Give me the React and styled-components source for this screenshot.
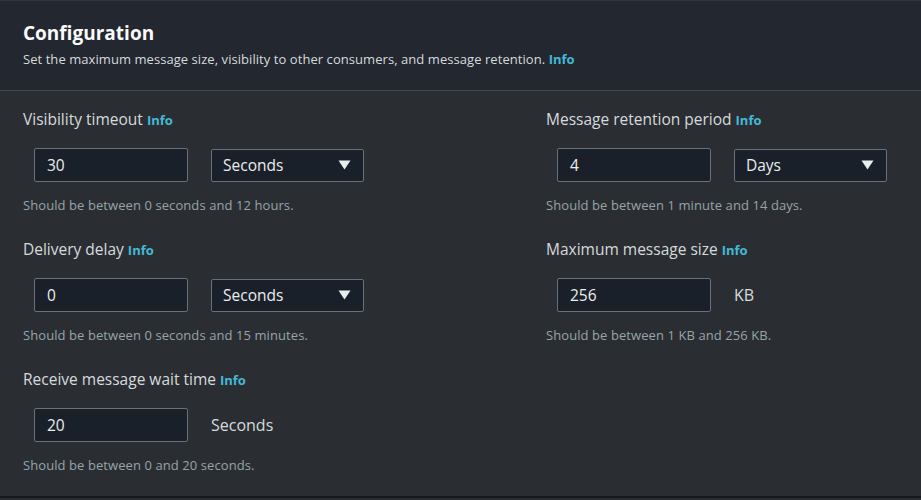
import React from 'react';
import styled, { createGlobalStyle } from 'styled-components';

const GlobalStyle = createGlobalStyle`
  html, body {
    margin: 0;
    padding: 0;
    background: #2a2e33;
  }
  body {
    font-family: 'Open Sans', 'Noto Sans', sans-serif;
  }
`;

const fields = {
  left: [
    {
      label: 'Visibility timeout',
      value: '30',
      unit: 'Seconds',
      select: true,
      hint: 'Should be between 0 seconds and 12 hours.',
    },
    {
      label: 'Delivery delay',
      value: '0',
      unit: 'Seconds',
      select: true,
      hint: 'Should be between 0 seconds and 15 minutes.',
    },
    {
      label: 'Receive message wait time',
      value: '20',
      unit: 'Seconds',
      select: false,
      hint: 'Should be between 0 and 20 seconds.',
    },
  ],
  right: [
    {
      label: 'Message retention period',
      value: '4',
      unit: 'Days',
      select: true,
      hint: 'Should be between 1 minute and 14 days.',
    },
    {
      label: 'Maximum message size',
      value: '256',
      unit: 'KB',
      select: false,
      hint: 'Should be between 1 KB and 256 KB.',
    },
  ],
};

const Caret = () => (
  <svg width="13" height="10" viewBox="0 0 13 10">
    <path d="M0.5 0.5 L12.5 0.5 L6.5 9.5 Z" fill="#eaeded" />
  </svg>
);

const Field = ({ data }) => (
  <FieldWrap>
    <Label>
      {data.label} <Info>Info</Info>
    </Label>
    <Controls>
      <Input>{data.value}</Input>
      {data.select ? (
        <Select>
          <span>{data.unit}</span>
          <Caret />
        </Select>
      ) : (
        <Unit>{data.unit}</Unit>
      )}
    </Controls>
    <Hint>{data.hint}</Hint>
  </FieldWrap>
);

const App = () => {
  return (
    <>
      <GlobalStyle />
      <Panel>
        <Header>
          <Title>Configuration</Title>
          <Description>
            Set the maximum message size, visibility to other consumers, and message retention.{' '}
            <Info>Info</Info>
          </Description>
        </Header>
        <Body>
          <Column>
            {fields.left.map((f) => (
              <Field key={f.label} data={f} />
            ))}
          </Column>
          <Column>
            {fields.right.map((f) => (
              <Field key={f.label} data={f} />
            ))}
          </Column>
        </Body>
      </Panel>
    </>
  );
};

const Panel = styled.div`
  width: 921px;
  height: 498px;
  background: #2a2e33;
  border-bottom: 2px solid #16191f;
  box-sizing: border-box;
`;

const Header = styled.div`
  background: #232730;
  height: 91px;
  border-top: 1px solid #2f343b;
  border-bottom: 1px solid #434951;
  padding: 19px 23px 0;
  box-sizing: border-box;
`;

const Title = styled.h2`
  margin: 0;
  color: #fafafa;
  font-size: 19px;
  font-weight: 700;
  line-height: 26px;
`;

const Description = styled.p`
  margin: 3px 0 0;
  color: #d5dbdb;
  font-size: 13px;
  line-height: 20px;
  letter-spacing: 0.06px;
`;

const Info = styled.span`
  color: #44b9d6;
  font-weight: 700;
  font-size: 13px;
  letter-spacing: 0;
`;

const Body = styled.div`
  display: grid;
  grid-template-columns: 523px 1fr;
  padding: 17px 23px 0;
`;

const Column = styled.div`
  display: flex;
  flex-direction: column;
`;

const FieldWrap = styled.div`
  height: 130px;
`;

const Label = styled.div`
  height: 22px;
  color: #d5dbdb;
  font-size: 15.5px;
  line-height: 22px;
`;

const Controls = styled.div`
  display: flex;
  align-items: center;
  gap: 23px;
  margin: 18px 0 0 11px;
`;

const Input = styled.div`
  width: 154px;
  height: 34px;
  box-sizing: border-box;
  border: 1px solid #687078;
  border-radius: 2px;
  background: #1a2029;
  color: #eaeded;
  font-size: 15.5px;
  padding: 0 12px;
  display: flex;
  align-items: center;
`;

const Select = styled.div`
  width: 153px;
  height: 33px;
  box-sizing: border-box;
  border: 1px solid #687078;
  border-radius: 2px;
  background: #1a2029;
  color: #eaeded;
  font-size: 15.5px;
  padding: 0 12px 0 11px;
  display: flex;
  align-items: center;
  justify-content: space-between;
`;

const Unit = styled.span`
  color: #d5dbdb;
  font-size: 16px;
`;

const Hint = styled.div`
  margin-top: 13px;
  color: #95a5a6;
  font-size: 13px;
  line-height: 20px;
  letter-spacing: 0.08px;
`;

export default App;
